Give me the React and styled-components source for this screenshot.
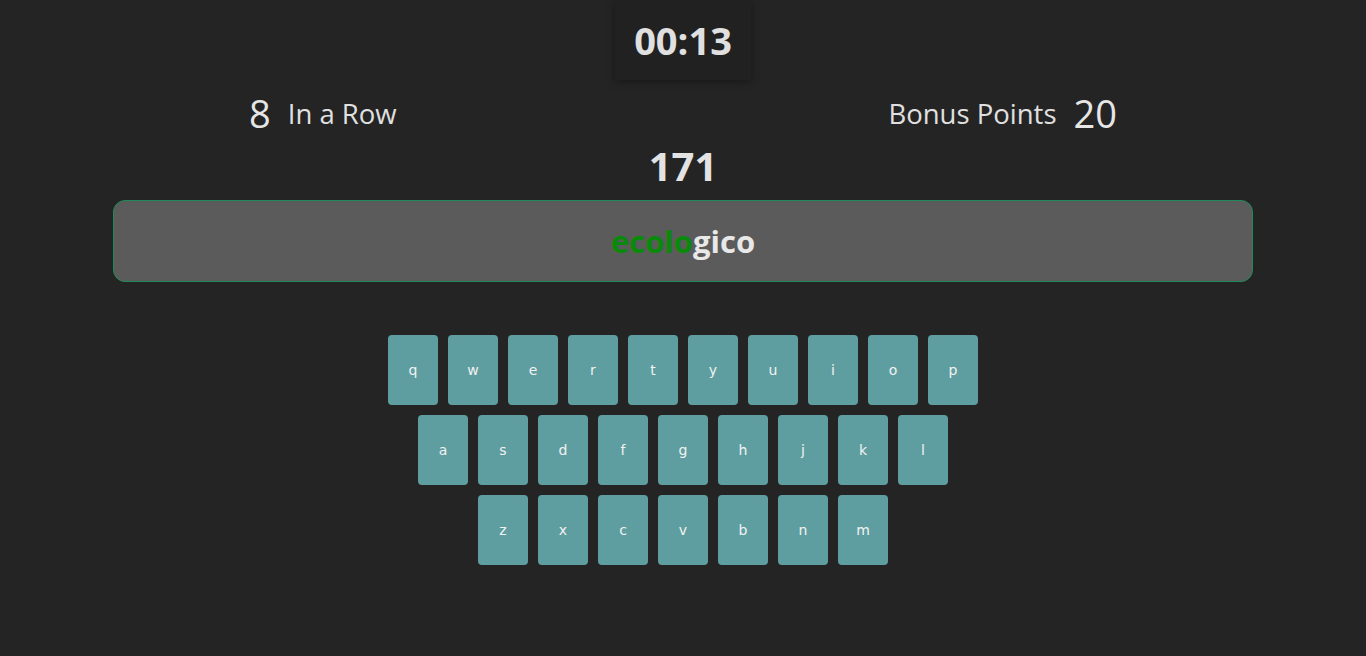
import React from "react";
import styled, { createGlobalStyle } from "styled-components";

const GlobalStyle = createGlobalStyle`
  html, body {
    margin: 0;
    padding: 0;
    background: #242424;
  }
  body {
    font-family: "Open Sans", "Noto Sans", sans-serif;
    color: #e3e3e3;
  }
`;

const rows = ["qwertyuiop", "asdfghjkl", "zxcvbnm"];

export default function App() {
  const word = "ecologico";
  const typed = 5;

  return (
    <>
      <GlobalStyle />
      <Page>
        <Timer>00:13</Timer>
        <Stats>
          <Stat>
            <Number>8</Number>
            <Label>In a Row</Label>
          </Stat>
          <Stat>
            <Label>Bonus Points</Label>
            <Number>20</Number>
          </Stat>
        </Stats>
        <Score>171</Score>
        <WordBox>
          <Done>{word.slice(0, typed)}</Done>
          <Rest>{word.slice(typed)}</Rest>
        </WordBox>
        <Keyboard>
          {rows.map((row) => (
            <KeyRow key={row}>
              {row.split("").map((k) => (
                <Key key={k}>{k}</Key>
              ))}
            </KeyRow>
          ))}
        </Keyboard>
      </Page>
    </>
  );
}

const Page = styled.div`
  width: 1366px;
  height: 656px;
  display: flex;
  flex-direction: column;
  align-items: center;
  box-sizing: border-box;
`;

const Timer = styled.div`
  width: 136px;
  height: 80px;
  box-sizing: border-box;
  display: flex;
  align-items: center;
  justify-content: center;
  background: #212121;
  box-shadow: 0 2px 8px rgba(0, 0, 0, 0.35);
  font-size: 38px;
  font-weight: 700;
  color: #e0e0e0;
`;

const Stats = styled.div`
  width: 100%;
  height: 66px;
  box-sizing: border-box;
  padding: 0 249px;
  display: flex;
  justify-content: space-between;
  align-items: center;
`;

const Stat = styled.div`
  display: flex;
  align-items: center;
  gap: 17px;
`;

const Number = styled.span`
  font-size: 38px;
  font-weight: 400;
  color: #e6e6e6;
`;

const Label = styled.span`
  font-size: 27.5px;
  color: #e0e0e0;
`;

const Score = styled.div`
  height: 54px;
  line-height: 40px;
  font-size: 40px;
  font-weight: 700;
  color: #e3e3e3;
`;

const WordBox = styled.div`
  width: 1140px;
  height: 82px;
  box-sizing: border-box;
  border: 1px solid #1f8a5a;
  border-radius: 12px;
  background: #5a5b5a;
  display: flex;
  align-items: center;
  justify-content: center;
  font-size: 31px;
  font-weight: 700;
  margin-bottom: 53px;
`;

const Done = styled.span`
  color: #0a8a0a;
`;

const Rest = styled.span`
  color: #e8e8e8;
`;

const Keyboard = styled.div`
  display: flex;
  flex-direction: column;
  align-items: center;
  gap: 10px;
`;

const KeyRow = styled.div`
  display: flex;
  gap: 10px;
`;

const Key = styled.div`
  width: 50px;
  height: 70px;
  border-radius: 4px;
  background: #5f9ea0;
  display: flex;
  align-items: center;
  justify-content: center;
  font-family: "DejaVu Sans", sans-serif;
  font-size: 14px;
  color: #f2f2f2;
`;
